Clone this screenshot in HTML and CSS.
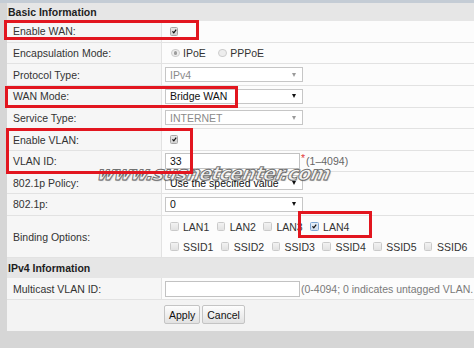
FILE: index.html
```html
<!DOCTYPE html>
<html>
<head>
    <meta charset="utf-8">
    <title>WAN Configuration</title>
    <link rel="stylesheet" href="styles.css">
</head>
<body>
    <div class="top"></div>

    <div class="panel">
        <div class="title">Basic Information</div>

        <div class="row">
            <div class="label">Enable WAN:</div>
            <div class="value"><span class="check on first"><svg viewBox="0 0 9 9"><path d="M2 4.6 L3.9 6.6 L7.2 2.2"/></svg></span></div>
        </div>
        <div class="row">
            <div class="label">Encapsulation Mode:</div>
            <div class="value">
                <span class="radio sel"></span><span class="opt">IPoE</span>
                <span class="radio"></span><span class="opt">PPPoE</span>
            </div>
        </div>
        <div class="row">
            <div class="label">Protocol Type:</div>
            <div class="value"><div class="select off"><span>IPv4</span><span class="arrow"></span></div></div>
        </div>
        <div class="row">
            <div class="label">WAN Mode:</div>
            <div class="value"><div class="select"><span>Bridge WAN</span><span class="arrow"></span></div></div>
        </div>
        <div class="row">
            <div class="label">Service Type:</div>
            <div class="value"><div class="select off"><span>INTERNET</span><span class="arrow"></span></div></div>
        </div>
        <div class="row">
            <div class="label">Enable VLAN:</div>
            <div class="value"><span class="check on first"><svg viewBox="0 0 9 9"><path d="M2 4.6 L3.9 6.6 L7.2 2.2"/></svg></span></div>
        </div>
        <div class="row">
            <div class="label">VLAN ID:</div>
            <div class="value">
                <div class="input">33</div>
                <span class="note"><span class="req">*</span>(1–4094)</span>
            </div>
        </div>
        <div class="row">
            <div class="label">802.1p Policy:</div>
            <div class="value"><div class="select"><span>Use the specified value</span><span class="arrow"></span></div></div>
        </div>
        <div class="row">
            <div class="label">802.1p:</div>
            <div class="value"><div class="select"><span>0</span><span class="arrow"></span></div></div>
        </div>
        <div class="row tall">
            <div class="label">Binding Options:</div>
            <div class="value lines">
                <div class="opts lan">
                    <span class="item"><span class="check"></span>LAN1</span>
                    <span class="item"><span class="check"></span>LAN2</span>
                    <span class="item"><span class="check"></span>LAN3</span>
                    <span class="item"><span class="check on blue"><svg viewBox="0 0 9 9"><path d="M2 4.6 L3.9 6.6 L7.2 2.2"/></svg></span>LAN4</span>
                </div>
                <div class="opts ssid">
                    <span class="item"><span class="check"></span>SSID1</span>
                    <span class="item"><span class="check"></span>SSID2</span>
                    <span class="item"><span class="check"></span>SSID3</span>
                    <span class="item"><span class="check"></span>SSID4</span>
                    <span class="item"><span class="check"></span>SSID5</span>
                    <span class="item"><span class="check"></span>SSID6</span>
                </div>
            </div>
        </div>

        <div class="title sub">IPv4 Information</div>

        <div class="row">
            <div class="label">Multicast VLAN ID:</div>
            <div class="value">
                <div class="input"></div>
                <span class="note grey">(0-4094; 0 indicates untagged VLAN.</span>
            </div>
        </div>
        <div class="buttons">
            <button class="btn">Apply</button>
            <button class="btn">Cancel</button>
        </div>
    </div>

    <!-- watermark and the red marks drawn over the form -->
    <div class="mark">www.susnetcenter.com</div>
    <div class="hl hl-wan"></div>
    <div class="hl hl-mode"></div>
    <div class="hl hl-vlan"></div>
    <div class="hl hl-lan"></div>
</body>
</html>
```

FILE: styles.css
```css
* {
    box-sizing: border-box;
}

body {
    margin: 0;
    height: 348px;
    overflow: hidden;
    background: #d6d6d6;
    font-family: "Liberation Sans", Arial, sans-serif;
    font-size: 10.5px;
    color: #333;
    position: relative;
}

.top {
    height: 3px;
    background: #c4ccd5;
}

.panel {
    margin-left: 7px;
    background: #fbfbfb;
}

.title {
    height: 18px;
    line-height: 18px;
    padding-left: 1px;
    background: #e6e6e6;
    font-weight: bold;
    color: #1e1e1e;
}

.title.sub {
    height: 20px;
    line-height: 20px;
}

.row {
    display: grid;
    grid-template-columns: 155px 1fr;
    height: 21.65px;
    border-bottom: 1px solid #e2e2e2;
}

.row.tall {
    height: 42.5px;
}

.label {
    display: flex;
    align-items: center;
    padding-left: 6px;
    background: #f6f6f6;
    border-right: 1px solid #e2e2e2;
}

.value {
    display: flex;
    align-items: center;
    padding-left: 3px;
    background: #fcfcfc;
    white-space: nowrap;
    overflow: hidden;
}

.value.lines {
    flex-direction: column;
    align-items: flex-start;
    justify-content: center;
    padding-left: 8px;
}

/* select boxes */
.select {
    width: 138px;
    height: 15px;
    border: 1px solid #c6c6c6;
    background: #fff;
    display: flex;
    align-items: center;
    justify-content: space-between;
    padding: 0 6px 0 4px;
    color: #111;
}

.select.off {
    color: #8a8a8a;
}

.arrow {
    width: 0;
    height: 0;
    border-left: 2.5px solid transparent;
    border-right: 2.5px solid transparent;
    border-top: 4px solid #111;
}

.select.off .arrow {
    border-top-color: #9a9a9a;
}

.input {
    width: 135px;
    height: 16px;
    flex-shrink: 0;
    border: 1px solid #c2c2c2;
    background: #fff;
    padding-left: 4px;
    line-height: 14px;
    color: #111;
}

.note {
    margin-left: 1px;
    color: #666;
}

.note.grey {
    color: #7a7a7a;
}

.req {
    color: #e23a3a;
    position: relative;
    top: -3px;
    margin-right: 1px;
}

/* check boxes and radios */
.check {
    width: 8.5px;
    height: 8.5px;
    border: 1px solid #cacaca;
    border-radius: 1.5px;
    background: linear-gradient(#f2f2f2, #e2e2e2);
    display: inline-flex;
    flex-shrink: 0;
    margin-right: 4.5px;
}

.check.first {
    margin-left: 4.5px;
}

.check.on {
    border-color: #a8a8a8;
    background: linear-gradient(#e8e8e8, #d2d2d2);
}

.check.blue {
    border-color: #7ea6d4;
    background: linear-gradient(#e6eef7, #cfdcec);
}

.check svg {
    width: 100%;
    height: 100%;
}

.check path {
    fill: none;
    stroke: #111;
    stroke-width: 1.7;
}

.radio {
    width: 8.5px;
    height: 8.5px;
    border: 1px solid #cdcdcd;
    border-radius: 50%;
    background: #ededed;
    margin: 0 3.5px 0 6px;
    display: inline-flex;
    align-items: center;
    justify-content: center;
}

.radio.sel::after {
    content: "";
    width: 3.5px;
    height: 3.5px;
    border-radius: 50%;
    background: #9c9c9c;
}

.opt {
    margin-right: 6.5px;
    color: #333;
}

.opts {
    display: flex;
    height: 20px;
    align-items: center;
}

.item {
    display: flex;
    align-items: center;
}

.lan .item {
    width: 46.7px;
}

.ssid .item {
    width: 50.8px;
}

/* buttons */
.buttons {
    height: 31px;
    display: flex;
    align-items: center;
    gap: 2px;
    padding-left: 157px;
    background: #f3f3f3;
}

.btn {
    height: 19px;
    padding: 0 4px;
    font-family: "Liberation Sans", Arial, sans-serif;
    font-size: 10.5px;
    color: #111;
    border: 1px solid #c4c4c4;
    border-radius: 2px;
    background: linear-gradient(#fdfdfd, #e2e2e2);
    margin-top: -1px;
}

/* overlays */
.mark {
    position: absolute;
    left: 98px;
    top: 162px;
    font-family: "DejaVu Sans", sans-serif;
    font-weight: bold;
    font-style: italic;
    font-size: 19px;
    letter-spacing: -0.8px;
    color: rgba(255, 255, 255, 0.8);
    -webkit-text-stroke: 1px rgba(70, 70, 70, 0.75);
    text-shadow: 1px 1px 1px rgba(0, 0, 0, 0.25);
    transform: skewX(-12deg);
    white-space: nowrap;
}

.hl {
    position: absolute;
    border: 3px solid #e2161f;
}

.hl-wan {
    left: 4px;
    top: 20px;
    width: 195px;
    height: 20px;
}

.hl-mode {
    left: 5px;
    top: 86px;
    width: 233px;
    height: 22px;
}

.hl-vlan {
    left: 6px;
    top: 128px;
    width: 187px;
    height: 46px;
}

.hl-lan {
    left: 298px;
    top: 211px;
    width: 74px;
    height: 27px;
}
```
